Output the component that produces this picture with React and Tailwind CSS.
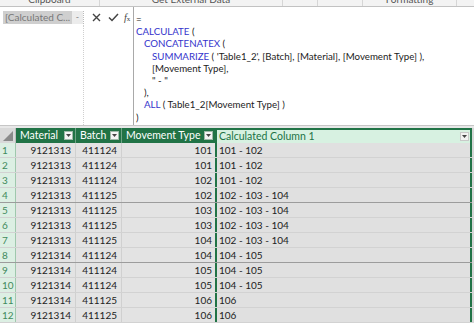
const font = { fontFamily: 'Lato, "Open Sans", Arial, sans-serif' }

const rows = [
  [9121313, 411124, 101, '101 - 102'],
  [9121313, 411124, 101, '101 - 102'],
  [9121313, 411124, 102, '101 - 102'],
  [9121313, 411125, 102, '102 - 103 - 104'],
  [9121313, 411125, 103, '102 - 103 - 104'],
  [9121313, 411125, 103, '102 - 103 - 104'],
  [9121313, 411125, 104, '102 - 103 - 104'],
  [9121314, 411124, 104, '104 - 105'],
  [9121314, 411124, 105, '104 - 105'],
  [9121314, 411124, 105, '104 - 105'],
  [9121314, 411125, 106, '106'],
  [9121314, 411125, 106, '106'],
]

const Blue = ({ children }) => <span className="text-[#3434cc]">{children}</span>

const FilterBtn = ({ light }) => (
  <span
    className={`ml-auto flex h-[9px] w-[9px] shrink-0 items-center justify-center border ${
      light ? 'border-[#c9c9c9] bg-[#f2f2f2]' : 'border-[#9fb9a9] bg-[#f4f4f4]'
    }`}
  >
    <svg width="5" height="3" viewBox="0 0 5 3">
      <path d="M0 0 L5 0 L2.5 3 Z" fill="#444" />
    </svg>
  </span>
)

const RibbonGroup = ({ w, label }) => (
  <div className={`${w} flex h-full justify-center overflow-hidden border-r border-[#d6d6d6]`}>
    {label && (
      <span className="-mt-[6px] whitespace-nowrap text-[10px] leading-[10px] text-[#555]">{label}</span>
    )}
  </div>
)

export default function App() {
  return (
    <div className="h-[323px] w-[474px] overflow-hidden bg-white" style={font}>
      {/* ribbon bottom edge */}
      <div className="flex h-[7px] border-b border-[#c2c2c2] bg-[#f3f3f3]">
        <RibbonGroup w="w-[100px]" label="Clipboard" />
        <RibbonGroup w="w-[183px]" label="Get External Data" />
        <RibbonGroup w="w-[35px]" />
        <RibbonGroup w="w-[45px]" />
        <RibbonGroup w="w-[94px]" label="Formatting" />
        <div className="flex-1" />
      </div>

      {/* formula bar */}
      <div className="flex h-[119px] border-b border-[#c6c6c6]">
        <div className="flex w-[134px] shrink-0 flex-col border-r border-[#a9a9a9]">
          <div className="flex h-[18px] items-center pt-[2px]">
            <div className="ml-[3px] flex h-[13px] w-[69px] items-center overflow-hidden whitespace-nowrap bg-[#cfcfcf] pl-[2px] text-[10px] text-[#777]">
              [Calculated C...
            </div>
            <div className="flex h-[13px] w-[11px] items-center justify-center bg-[#ececec] text-[9px] text-[#888]">-</div>
            <div className="flex h-[13px] flex-1 items-center border-l border-dotted border-[#bbb] pl-[8px]">
              <svg width="9" height="9" viewBox="0 0 9 9">
                <path d="M1 1 L8 8 M8 1 L1 8" stroke="#444" strokeWidth="1.4" />
              </svg>
              <svg width="11" height="9" viewBox="0 0 11 9" className="ml-[7px]">
                <path d="M1 4.5 L4 7.5 L10 1" stroke="#444" strokeWidth="1.5" fill="none" />
              </svg>
              <span className="ml-[5px] text-[10px] italic text-[#444]" style={{ fontFamily: '"Liberation Serif", serif' }}>
                f<span className="text-[7px] not-italic">x</span>
              </span>
            </div>
          </div>
          <div className="ml-[83px] flex-1 border-l border-dotted border-[#cfcfcf]" />
        </div>
        <div className="flex-1 pl-[2px] pt-[6px] text-[9.7px] leading-[12.2px] text-[#222]">
          <div>=</div>
          <div><Blue>CALCULATE</Blue> (</div>
          <div className="pl-[8px]"><Blue>CONCATENATEX</Blue> (</div>
          <div className="whitespace-nowrap pl-[16px]">
            <Blue>SUMMARIZE</Blue> ( 'Table1_2', [Batch], [Material], [Movement Type] ),
          </div>
          <div className="pl-[16px]">[Movement Type],</div>
          <div className="pl-[16px]">" - "</div>
          <div className="pl-[8px]">),</div>
          <div className="pl-[8px]"><Blue>ALL</Blue> ( Table1_2[Movement Type] )</div>
          <div>)</div>
        </div>
      </div>

      {/* grid */}
      <div className="h-[2px] bg-[#e8e8e8]" />
      <div className="flex bg-[#d6d6d6]">
        <div className="w-[472px]">
          {/* header */}
          <div className="flex h-[15px] text-[10.5px]">
            <div className="relative w-[16px] shrink-0 border-r border-[#bdbdbd] bg-[#d9d9d9]">
              <svg width="10" height="10" viewBox="0 0 10 10" className="absolute bottom-[2px] right-[2px]">
                <path d="M10 0 L10 10 L0 10 Z" fill="#8a8a8a" />
              </svg>
            </div>
            <div className="flex w-[60px] items-center border-r border-[#6fa386] bg-[#217346] pl-[4px] pr-[2px] text-white">
              Material <FilterBtn />
            </div>
            <div className="flex w-[46px] items-center border-r border-[#6fa386] bg-[#217346] pl-[4px] pr-[2px] text-white">
              Batch <FilterBtn />
            </div>
            <div className="flex w-[93px] items-center bg-[#217346] pl-[4px] pr-[2px] text-white">
              Movement Type <FilterBtn />
            </div>
            <div className="flex w-[257px] items-center border-x-2 border-t-2 border-[#217346] bg-[#d7f1e1] pl-[2px] pr-[1px] text-[#217346]">
              Calculated Column 1 <FilterBtn light />
            </div>
          </div>
          {/* rows */}
          {rows.map((r, i) => (
            <div
              key={i}
              className={`flex h-[15px] text-[10px] text-[#222] ${
                i === 3 || i === 7 ? 'border-b border-[#9c9c9c]' : 'border-b border-[#d2d2d2]'
              }`}
            >
              <div className="flex w-[16px] shrink-0 items-center border-r border-[#9fc8ad] bg-[#dcefe3] pl-[2px] text-[#3f8a5c]">
                {i + 1}
              </div>
              <div className="flex w-[60px] items-center justify-end border-r border-[#d0d0d0] bg-[#e3e3e3] pr-[4px]">{r[0]}</div>
              <div className="flex w-[46px] items-center justify-end border-r border-[#d0d0d0] bg-[#e3e3e3] pr-[4px]">{r[1]}</div>
              <div className="flex w-[93px] items-center justify-end bg-[#e3e3e3] pr-[3px]">{r[2]}</div>
              <div className="flex w-[257px] items-center border-x-2 border-[#217346] bg-[#e0e0e0] pl-[2px]">{r[3]}</div>
            </div>
          ))}
        </div>
      </div>
    </div>
  )
}
